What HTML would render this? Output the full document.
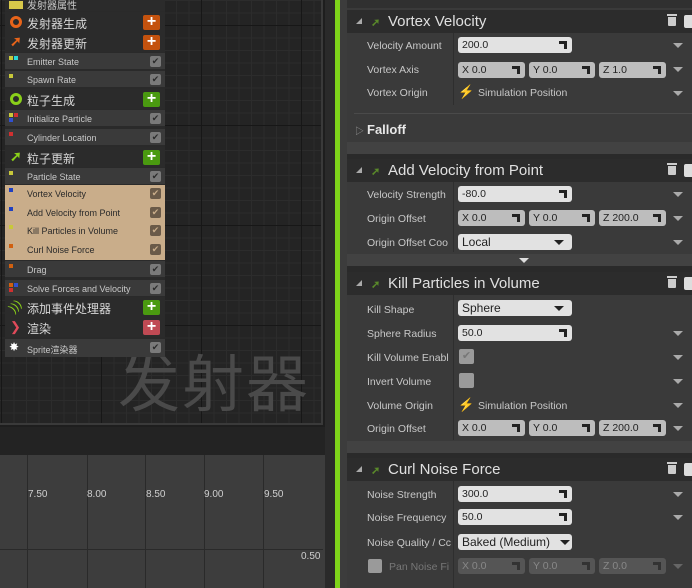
<!DOCTYPE html>
<html><head><meta charset="utf-8"><style>
*{margin:0;padding:0;box-sizing:border-box}
body{width:692px;height:588px;overflow:hidden;background:#1e1e1e;font-family:"Liberation Sans","Noto Sans CJK SC",sans-serif;position:relative}
.a{position:absolute}
#graph{left:0;top:0;width:323px;height:425px;background-color:#242424;
background-image:linear-gradient(to right,#171717 1px,transparent 1px),linear-gradient(to bottom,#171717 1px,transparent 1px),linear-gradient(to right,#2c2c2c 1px,transparent 1px),linear-gradient(to bottom,#2c2c2c 1px,transparent 1px);
background-size:100px 100px,100px 100px,12.5px 12.5px,12.5px 12.5px;background-position:1px 25px,1px 25px,1px 0,0 0;border-bottom:2px solid #3a3a3a;border-right:2px solid #3a3a3a}
.wm{left:118px;top:334px;font-size:62px;color:#4a4a4a;letter-spacing:2px;font-family:"Noto Sans CJK SC",sans-serif}
#lp{left:5px;top:0;width:160px;height:357px;background:#2a2a2a}
.r{position:absolute;left:0;width:160px;color:#c8c8c8;font-size:9px}
.r .t{position:absolute;left:22px}
.h{background:#2b2b2b;height:20px;font-size:12px;color:#d8d8d8}
.h .t{top:3px}
.s{background:#3a3a3a;height:17px;border-top:1px solid #2a2a2a}
.s .t{top:4px}
.tan{background:#c9ad8a;color:#2a2a2a}
.cb{position:absolute;left:145px;top:3px;width:11px;height:11px;background:#7a7a7a;border-radius:2px;color:#2a2a2a;font-size:9px;line-height:11px;text-align:center}
.tan .cb{background:#6a5a48;color:#c9ad8a}
.plus{position:absolute;left:138px;top:3px;width:17px;height:15px;border-radius:2px;color:#fff;font-size:16px;line-height:14px;text-align:center;font-weight:bold}
.dot{position:absolute;width:4px;height:4px}
#curve{left:0;top:455px;width:325px;height:133px;background:#3d3d3d}
.vl{position:absolute;width:1px;height:133px;background:#2a2a2a;top:0}
.lb{position:absolute;top:34px;font-size:10px;color:#cfcfcf}
#rp{left:347px;top:0;width:345px;height:588px;background:#3a3a3a}
.sh{position:absolute;left:347px;width:345px;height:23px;background:#2c2c2c;color:#e0e0e0;font-size:15px}
.sh .tt{position:absolute;left:41px;top:3px}
.sh .tri{position:absolute;left:9px;top:8px;width:0;height:0;border-left:6px solid transparent;border-bottom:6px solid #aaa}
.sh .ar{position:absolute;left:24px;top:6px;color:#5a8a2a;font-size:11px;font-weight:bold}
.sh .tr{position:absolute;left:321px;top:7px;width:8px;height:9px;background:#ccc;border-radius:0 0 1px 1px}
.sh .tr::before{content:"";position:absolute;left:-1px;top:-3px;width:10px;height:2px;background:#ccc}
.sh .sq{position:absolute;left:337px;top:5px;width:10px;height:13px;background:#ddd;border-radius:2px}
.lab{position:absolute;left:367px;font-size:10.5px;color:#c8c8c8}
.box{position:absolute;height:16px;background:#e2e2e2;border-radius:3px;font-size:10.5px;color:#222;padding:2px 0 0 4px}
.box.v{background:#bdbdbd}
.box.dis{background:#555;color:#888}
.rs{position:absolute;right:5px;top:4px;width:8px;height:8px;border-top:3px solid #222;border-right:3px solid #222}
.dd{position:absolute;left:673px;width:0;height:0;border-left:5px solid transparent;border-right:5px solid transparent;border-top:5px solid #aaa}
.ddb{position:absolute;right:8px;top:6px;width:0;height:0;border-left:5px solid transparent;border-right:5px solid transparent;border-top:5px solid #222}
.sep{position:absolute;left:453px;width:1px;background:#2e2e2e}
</style></head><body>
<div id="graph" class="a"></div>
<div class="a" style="left:0;top:427px;width:325px;height:28px;background:#232323"></div>
<div class="a wm">发射器</div>
<div id="lp" class="a">
 <div class="r" style="top:0;height:11px;background:#2b2b2b"><div class="a" style="left:4px;top:1px;width:14px;height:8px;background:#d8c84a"></div><span class="t" style="top:-3px;font-size:10px">发射器属性</span></div>
 <div class="r h" style="top:12px"><div class="a" style="left:5px;top:4px;width:12px;height:12px;border:3px solid #e8641a;border-radius:50%"></div><span class="t">发射器生成</span><div class="plus" style="background:#c4520e">+</div></div>
 <div class="r h" style="top:32px"><span class="a" style="left:5px;top:1px;color:#e8641a;font-size:14px;font-weight:bold">➚</span><span class="t">发射器更新</span><div class="plus" style="background:#c4520e">+</div></div>
 <div class="r s" style="top:52px"><div class="dot" style="left:4px;top:3px;background:#c8c83a"></div><div class="dot" style="left:9px;top:3px;background:#2ad8d8"></div><span class="t">Emitter State</span><div class="cb">✔</div></div>
 <div class="r s" style="top:70px"><div class="dot" style="left:4px;top:3px;background:#c8c83a"></div><span class="t">Spawn Rate</span><div class="cb">✔</div></div>
 <div class="r h" style="top:89px"><div class="a" style="left:5px;top:4px;width:12px;height:12px;border:3px solid #8ad01a;border-radius:50%"></div><span class="t">粒子生成</span><div class="plus" style="background:#4a9a10">+</div></div>
 <div class="r s" style="top:109px"><div class="dot" style="left:4px;top:3px;background:#c8c83a"></div><div class="dot" style="left:9px;top:3px;background:#d03030"></div><div class="dot" style="left:4px;top:8px;background:#3050d0"></div><span class="t">Initialize Particle</span><div class="cb">✔</div></div>
 <div class="r s" style="top:128px"><div class="dot" style="left:4px;top:3px;background:#d03030"></div><span class="t">Cylinder Location</span><div class="cb">✔</div></div>
 <div class="r h" style="top:147px"><span class="a" style="left:5px;top:1px;color:#8ad01a;font-size:14px;font-weight:bold">➚</span><span class="t">粒子更新</span><div class="plus" style="background:#4a9a10">+</div></div>
 <div class="r s" style="top:167px"><div class="dot" style="left:4px;top:3px;background:#c8c83a"></div><span class="t">Particle State</span><div class="cb">✔</div></div>
 <div class="a" style="left:0;top:185px;width:160px;height:75px;background:#c9ad8a"></div>
 <div class="r s tan" style="top:185px;border:0"><div class="dot" style="left:4px;top:3px;background:#2040c0"></div><span class="t">Vortex Velocity</span><div class="cb">✔</div></div>
 <div class="r s tan" style="top:204px;border:0"><div class="dot" style="left:4px;top:3px;background:#2040c0"></div><span class="t">Add Velocity from Point</span><div class="cb">✔</div></div>
 <div class="r s tan" style="top:222px;border:0"><div class="dot" style="left:4px;top:3px;background:#c8c83a"></div><span class="t">Kill Particles in Volume</span><div class="cb">✔</div></div>
 <div class="r s tan" style="top:241px;border:0"><div class="dot" style="left:4px;top:3px;background:#d06010"></div><span class="t">Curl Noise Force</span><div class="cb">✔</div></div>
 <div class="r s" style="top:260px"><div class="dot" style="left:4px;top:3px;background:#d06010"></div><span class="t">Drag</span><div class="cb">✔</div></div>
 <div class="r s" style="top:279px"><div class="dot" style="left:4px;top:3px;background:#d06010"></div><div class="dot" style="left:9px;top:3px;background:#3050d0"></div><div class="dot" style="left:4px;top:8px;background:#d03030"></div><span class="t">Solve Forces and Velocity</span><div class="cb">✔</div></div>
 <div class="r h" style="top:297px"><span class="a" style="left:4px;top:2px;color:#8ad01a;font-size:12px;transform:rotate(-45deg)">)))</span><span class="t">添加事件处理器</span><div class="plus" style="background:#4a9a10">+</div></div>
 <div class="r h" style="top:317px"><span class="a" style="left:5px;top:2px;color:#e04a5a;font-size:13px">❯</span><span class="t">渲染</span><div class="plus" style="background:#c04a54">+</div></div>
 <div class="r s" style="top:338px;height:19px"><span class="a" style="left:4px;top:1px;color:#fff;font-size:12px">✸</span><span class="t">Sprite渲染器</span><div class="cb">✔</div></div>
</div>
<div id="curve" class="a">
 <div class="vl" style="left:27px"></div><div class="vl" style="left:87px"></div><div class="vl" style="left:145px"></div><div class="vl" style="left:204px"></div><div class="vl" style="left:263px"></div>
 <div class="a" style="left:0;top:94px;width:323px;height:1px;background:#2a2a2a"></div>
 <div class="lb" style="left:28px">7.50</div><div class="lb" style="left:87px">8.00</div><div class="lb" style="left:146px">8.50</div><div class="lb" style="left:204px">9.00</div><div class="lb" style="left:264px">9.50</div>
 <div class="lb" style="left:301px;top:96px">0.50</div>
</div>
<div class="a" style="left:325px;top:0;width:10px;height:588px;background:#2a2a2a"></div>
<div class="a" style="left:335px;top:0;width:5px;height:588px;background:#7ed31a"></div>
<div class="a" style="left:340px;top:0;width:7px;height:588px;background:#3c3c3c"></div>
<div id="rp" class="a"></div>
<div class="a" style="left:347px;top:0;width:345px;height:8px;background:#303030"></div>
<!-- Vortex -->
<div class="sh" style="top:10px"><div class="tri"></div><span class="ar">➚</span><span class="tt">Vortex Velocity</span><div class="tr"></div><div class="sq"></div></div>
<div class="sep" style="top:33px;height:72px"></div>
<div class="lab" style="top:40px">Velocity Amount</div><div class="box" style="left:458px;top:37px;width:114px">200.0<div class="rs"></div></div><div class="dd" style="top:43px"></div>
<div class="lab" style="top:64px">Vortex Axis</div>
<div class="box v" style="left:458px;top:62px;width:67px">X 0.0<div class="rs"></div></div><div class="box v" style="left:529px;top:62px;width:66px">Y 0.0<div class="rs"></div></div><div class="box v" style="left:599px;top:62px;width:67px">Z 1.0<div class="rs"></div></div><div class="dd" style="top:67px"></div>
<div class="lab" style="top:87px">Vortex Origin</div><span class="a" style="left:458px;top:84px;color:#eee;font-size:13px">⚡</span><div class="lab" style="left:478px;top:87px">Simulation Position</div><div class="dd" style="top:91px"></div>
<div class="a" style="left:354px;top:113px;width:338px;height:1px;background:#4a4a4a"></div>
<div class="a" style="left:355px;top:124px;color:#999;font-size:9px">▷</div>
<div class="a" style="left:367px;top:122px;color:#e8e8e8;font-size:13px;font-weight:bold">Falloff</div>
<div class="a" style="left:347px;top:142px;width:345px;height:12px;background:#424242"></div>
<div class="a" style="left:347px;top:154px;width:345px;height:5px;background:#2a2a2a"></div>
<!-- Add velocity -->
<div class="sh" style="top:159px"><div class="tri"></div><span class="ar">➚</span><span class="tt">Add Velocity from Point</span><div class="tr"></div><div class="sq"></div></div>
<div class="sep" style="top:182px;height:70px"></div>
<div class="lab" style="top:189px">Velocity Strength</div><div class="box" style="left:458px;top:186px;width:114px">-80.0<div class="rs"></div></div><div class="dd" style="top:192px"></div>
<div class="lab" style="top:213px">Origin Offset</div>
<div class="box v" style="left:458px;top:210px;width:67px">X 0.0<div class="rs"></div></div><div class="box v" style="left:529px;top:210px;width:66px">Y 0.0<div class="rs"></div></div><div class="box v" style="left:599px;top:210px;width:67px">Z 200.0<div class="rs"></div></div><div class="dd" style="top:216px"></div>
<div class="lab" style="top:237px">Origin Offset Coo</div><div class="box" style="left:458px;top:234px;width:114px;font-size:12px;padding-top:1px">Local<div class="ddb"></div></div><div class="dd" style="top:240px"></div>
<div class="a" style="left:347px;top:254px;width:345px;height:12px;background:#424242"></div>
<div class="a" style="left:519px;top:258px;border-left:5px solid transparent;border-right:5px solid transparent;border-top:5px solid #ddd;width:0;height:0"></div>
<div class="a" style="left:347px;top:266px;width:345px;height:6px;background:#2a2a2a"></div>
<!-- Kill -->
<div class="sh" style="top:272px"><div class="tri"></div><span class="ar">➚</span><span class="tt">Kill Particles in Volume</span><div class="tr"></div><div class="sq"></div></div>
<div class="sep" style="top:295px;height:145px"></div>
<div class="lab" style="top:304px">Kill Shape</div><div class="box" style="left:458px;top:300px;width:114px;font-size:12px;padding-top:1px">Sphere<div class="ddb"></div></div>
<div class="lab" style="top:328px">Sphere Radius</div><div class="box" style="left:458px;top:325px;width:114px">50.0<div class="rs"></div></div><div class="dd" style="top:331px"></div>
<div class="lab" style="top:352px">Kill Volume Enabl</div><div class="a" style="left:459px;top:349px;width:15px;height:15px;background:#9a9a9a;border-radius:2px;color:#777;font-size:11px;text-align:center;line-height:15px">✔</div><div class="dd" style="top:355px"></div>
<div class="lab" style="top:376px">Invert Volume</div><div class="a" style="left:459px;top:373px;width:15px;height:15px;background:#9a9a9a;border-radius:2px"></div><div class="dd" style="top:379px"></div>
<div class="lab" style="top:400px">Volume Origin</div><span class="a" style="left:458px;top:397px;color:#eee;font-size:13px">⚡</span><div class="lab" style="left:478px;top:400px">Simulation Position</div><div class="dd" style="top:403px"></div>
<div class="lab" style="top:423px">Origin Offset</div>
<div class="box v" style="left:458px;top:420px;width:67px">X 0.0<div class="rs"></div></div><div class="box v" style="left:529px;top:420px;width:66px">Y 0.0<div class="rs"></div></div><div class="box v" style="left:599px;top:420px;width:67px">Z 200.0<div class="rs"></div></div><div class="dd" style="top:426px"></div>
<div class="a" style="left:347px;top:441px;width:345px;height:12px;background:#424242"></div>
<div class="a" style="left:347px;top:453px;width:345px;height:5px;background:#2a2a2a"></div>
<!-- Curl -->
<div class="sh" style="top:458px"><div class="tri"></div><span class="ar">➚</span><span class="tt">Curl Noise Force</span><div class="tr"></div><div class="sq"></div></div>
<div class="sep" style="top:481px;height:107px"></div>
<div class="lab" style="top:489px">Noise Strength</div><div class="box" style="left:458px;top:486px;width:114px">300.0<div class="rs"></div></div><div class="dd" style="top:492px"></div>
<div class="lab" style="top:512px">Noise Frequency</div><div class="box" style="left:458px;top:509px;width:114px">50.0<div class="rs"></div></div><div class="dd" style="top:515px"></div>
<div class="lab" style="top:537px">Noise Quality / Cc</div><div class="box" style="left:458px;top:534px;width:114px;font-size:12px;padding-top:1px">Baked (Medium)<div class="ddb" style="right:2px"></div></div>
<div class="a" style="left:368px;top:559px;width:14px;height:14px;background:#9a9a9a;border-radius:2px"></div><div class="lab" style="left:389px;top:561px;color:#777">Pan Noise Fi</div>
<div class="box dis" style="left:458px;top:558px;width:67px">X 0.0<div class="rs" style="border-color:#333"></div></div><div class="box dis" style="left:529px;top:558px;width:66px">Y 0.0<div class="rs" style="border-color:#333"></div></div><div class="box dis" style="left:599px;top:558px;width:67px">Z 0.0<div class="rs" style="border-color:#333"></div></div><div class="dd" style="top:564px;border-top-color:#666"></div>
</body></html>
